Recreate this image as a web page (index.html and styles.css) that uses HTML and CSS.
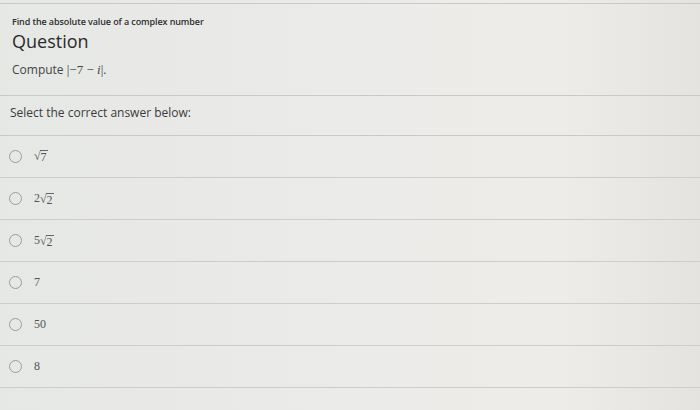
FILE: index.html
```html
<!DOCTYPE html>
<html>
<head>
<meta charset="utf-8">
<link rel="stylesheet" href="styles.css">
</head>
<body>
<div class="page">
  <div class="head">
    <div class="topic">Find the absolute value of a complex number</div>
    <div class="title">Question</div>
    <div class="prompt">Compute <span class="math">|−7 − <i>i</i>|</span>.</div>
  </div>
  <div class="select">Select the correct answer below:</div>
  <div class="opts">
    <div class="opt"><span class="radio"></span><span class="ans"><span class="rad">√</span><span class="rc">7</span></span></div>
    <div class="opt"><span class="radio"></span><span class="ans">2<span class="rad">√</span><span class="rc">2</span></span></div>
    <div class="opt"><span class="radio"></span><span class="ans">5<span class="rad">√</span><span class="rc">2</span></span></div>
    <div class="opt"><span class="radio"></span><span class="ans">7</span></div>
    <div class="opt"><span class="radio"></span><span class="ans">50</span></div>
    <div class="opt"><span class="radio"></span><span class="ans">8</span></div>
  </div>
</div>
</body>
</html>
```
FILE: styles.css
```css
html, body { margin: 0; padding: 0; }
body {
  width: 700px;
  height: 410px;
  overflow: hidden;
  background: linear-gradient(90deg, #e6e8e6 0%, #ebebe9 50%, #eeece9 80%, #e4e3e0 100%);
  font-family: "Open Sans", "Liberation Sans", sans-serif;
  color: #333;
}
.page {
  border-top: 1px solid #c9cac8;
  margin-top: 3px;
}
.head {
  padding: 12px 12px 0 12px;
  height: 79px;
  border-bottom: 1px solid #c9cac8;
}
.topic {
  font-size: 9px;
  font-weight: 600;
  color: #2e2e2e;
  line-height: 12px;
  letter-spacing: -0.1px;
}
.title {
  font-size: 18px;
  line-height: 24px;
  color: #2a2a2a;
  margin-top: 1px;
}
.prompt {
  font-size: 12px;
  line-height: 18px;
  margin-top: 8px;
  color: #444;
}
.math { font-family: "Liberation Serif", serif; font-size: 13px; }
.select {
  font-size: 12px;
  line-height: 18px;
  color: #3a3a3a;
  padding: 8px 10px 0 10px;
  height: 31px;
  border-bottom: 1px solid #c9cac8;
}
.opt {
  height: 41px;
  border-bottom: 1px solid #cdcecc;
  display: flex;
  align-items: center;
  padding-left: 9px;
}
.radio {
  width: 11px;
  height: 11px;
  border: 1.5px solid #9c9c9c;
  border-radius: 50%;
  box-sizing: content-box;
  margin-right: 12px;
}
.ans {
  font-family: "Liberation Serif", serif;
  font-size: 12px;
  color: #555;
  display: inline-flex;
  align-items: flex-end;
}
.rad { font-size: 12px; line-height: 13px; }
.rc { border-top: 1px solid #666; line-height: 12px; padding: 0 1px; margin-left: -1px; }
```
